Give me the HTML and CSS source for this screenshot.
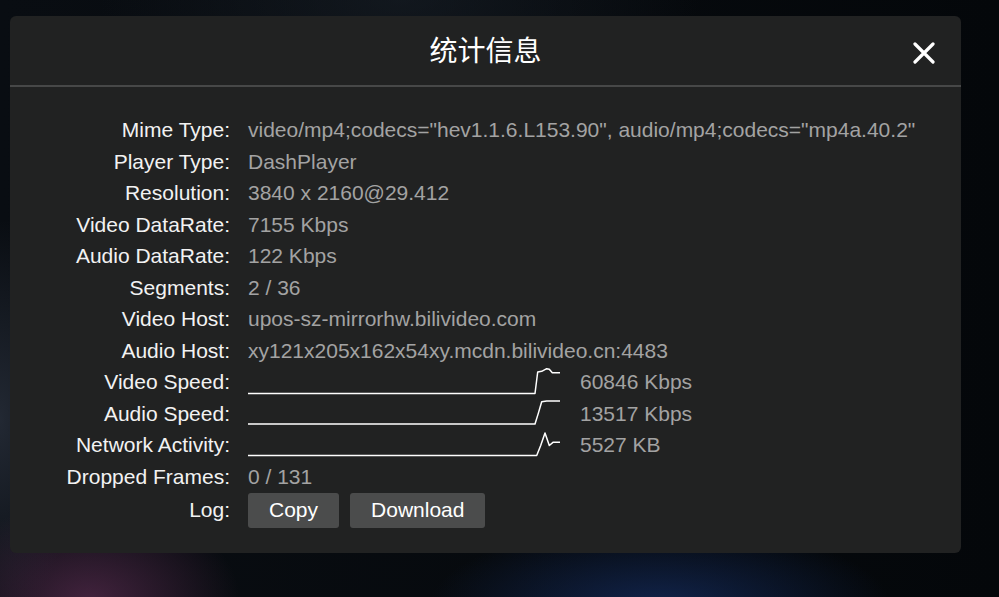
FILE: index.html
```html
<!DOCTYPE html>
<html lang="zh-CN">
<head>
<meta charset="utf-8">
<title>统计信息</title>
<link rel="stylesheet" href="styles.css">
</head>
<body>
<div class="stage">
  <div class="dialog">
    <div class="header">
      <div class="title">统计信息</div>
      <button class="close" aria-label="close">
        <svg width="22" height="22" viewBox="0 0 22 22"><path d="M2 2 L20 20 M20 2 L2 20" stroke="#fff" stroke-width="3.2" stroke-linecap="round" fill="none"/></svg>
      </button>
    </div>
    <div class="content">
      <div class="label">Mime Type:</div><div class="value">video/mp4;codecs="hev1.1.6.L153.90", audio/mp4;codecs="mp4a.40.2"</div>
      <div class="label">Player Type:</div><div class="value">DashPlayer</div>
      <div class="label">Resolution:</div><div class="value">3840 x 2160@29.412</div>
      <div class="label">Video DataRate:</div><div class="value">7155 Kbps</div>
      <div class="label">Audio DataRate:</div><div class="value">122 Kbps</div>
      <div class="label">Segments:</div><div class="value">2 / 36</div>
      <div class="label">Video Host:</div><div class="value">upos-sz-mirrorhw.bilivideo.com</div>
      <div class="label">Audio Host:</div><div class="value">xy121x205x162x54xy.mcdn.bilivideo.cn:4483</div>
      <div class="label">Video Speed:</div>
      <div class="value chartrow">
        <svg class="chart" width="313" height="32" viewBox="0 0 313 32"><polyline points="0,27.5 287,27.5 289.7,6 293.7,5.3 298.7,2.7 301.3,3.3 304.3,6.7 312,6.7" fill="none" stroke="#fff" stroke-width="1.5" stroke-linejoin="round"/></svg>
        <span>60846 Kbps</span>
      </div>
      <div class="label">Audio Speed:</div>
      <div class="value chartrow">
        <svg class="chart" width="313" height="32" viewBox="0 0 313 32"><polyline points="0,27 287,27 290.3,16.4 293.7,4.7 298.7,4 312,4" fill="none" stroke="#fff" stroke-width="1.5" stroke-linejoin="round"/></svg>
        <span>13517 Kbps</span>
      </div>
      <div class="label">Network Activity:</div>
      <div class="value chartrow">
        <svg class="chart" width="313" height="32" viewBox="0 0 313 32"><polyline points="0,26.5 288.7,26.5 292.7,16.5 297,3.9 301.3,16.5 305.3,13.2 312,13.2" fill="none" stroke="#fff" stroke-width="1.5" stroke-linejoin="round"/></svg>
        <span>5527 KB</span>
      </div>
      <div class="label">Dropped Frames:</div><div class="value">0 / 131</div>
      <div class="label">Log:</div>
      <div class="buttons">
        <button class="btn">Copy</button>
        <button class="btn">Download</button>
      </div>
    </div>
  </div>
</div>
</body>
</html>
```
FILE: styles.css
```css
html, body {
  margin: 0;
  padding: 0;
  height: 100%;
}
body {
  font-family: "Liberation Sans", Arial, sans-serif;
  background-color: #070b10;
  background-image:
    radial-gradient(ellipse 150px 100px at 90px 600px, rgba(80, 40, 72, 0.8), rgba(80, 40, 72, 0) 100%),
    radial-gradient(ellipse 230px 80px at 660px 605px, rgba(20, 42, 90, 0.8), rgba(20, 42, 90, 0) 100%),
    radial-gradient(ellipse 80px 200px at 0px 420px, rgba(45, 52, 65, 0.7), rgba(45, 52, 65, 0) 100%),
    radial-gradient(ellipse 300px 120px at 400px 0px, rgba(25, 32, 40, 0.6), rgba(25, 32, 40, 0) 100%),
    linear-gradient(90deg, #090d12, #04070a);
  overflow: hidden;
}
.stage {
  padding: 16px 0 0 10px;
}
.dialog {
  width: 951px;
  height: 537px;
  box-sizing: border-box;
  background: #212222;
  border-radius: 6px;
  color: #f2f2f2;
}
.header {
  height: 71px;
  box-sizing: border-box;
  border-bottom: 2px solid #474848;
  display: flex;
  align-items: center;
  justify-content: center;
  position: relative;
}
.title {
  font-family: "Noto Sans CJK SC", "Noto Sans", sans-serif;
  font-size: 28px;
  color: #fff;
  margin-top: -3px;
}
.close {
  position: absolute;
  left: 903px;
  top: 26px;
  width: 22px;
  height: 22px;
  padding: 0;
  border: 0;
  background: transparent;
  display: block;
}
.close svg {
  display: block;
}
.content {
  display: grid;
  grid-template-columns: 220px 1fr;
  grid-template-rows: repeat(12, 31.5px) 35px;
  column-gap: 18px;
  align-items: center;
  padding-top: 27.5px;
  font-size: 21px;
}
.label {
  text-align: right;
  color: #f2f2f2;
  white-space: nowrap;
}
.value {
  color: #a3a3a3;
  white-space: nowrap;
}
.chartrow {
  display: flex;
  align-items: center;
  gap: 19px;
}
.chart {
  display: block;
  margin-top: -1px;
}
.buttons {
  display: flex;
  gap: 11px;
  height: 35px;
}
.btn {
  height: 35px;
  padding: 0 21px;
  border: 0;
  border-radius: 3px;
  background: #4b4c4c;
  color: #fff;
  font-family: "Liberation Sans", Arial, sans-serif;
  font-size: 21px;
}
```
